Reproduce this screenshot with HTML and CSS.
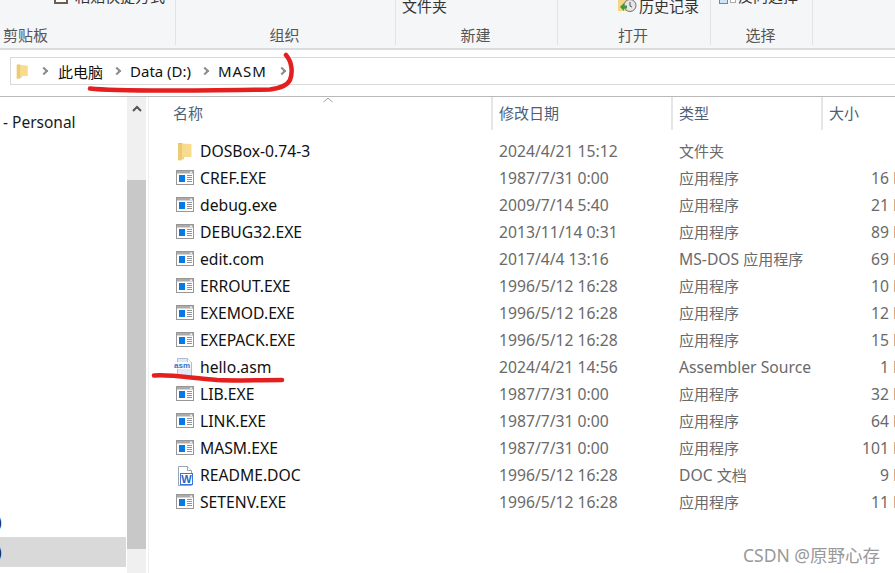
FILE: index.html
```html
<!DOCTYPE html>
<html lang="zh">
<head>
<meta charset="utf-8">
<title>MASM</title>
<link rel="stylesheet" href="styles.css">
</head>
<body>
<svg class="defs" width="0" height="0" aria-hidden="true">
  <symbol id="exe" viewBox="0 0 18 15">
    <rect x="0.500" y="0.500" width="17" height="14" fill="#fff" stroke="#979797"/>
    <rect x="1" y="1" width="16" height="2.500" fill="#ababab"/>
    <rect x="14" y="1.500" width="2" height="1.500" fill="#ececec"/>
    <rect x="3" y="5" width="6" height="7" fill="#0878e4"/>
    <path d="M11 5.500h5M11 7.500h5M11 9.500h5M11 11.500h5" stroke="#939393" stroke-width="1"/>
  </symbol>
  <symbol id="folder" viewBox="0 0 16 19">
    <path d="M1 1h4l2 2v14l-6 1.500z" fill="#e5c466"/>
    <path d="M5 1.500l8.500 0.500q1 0 1 1v11q0 1-1 1H7l-2 3.500q-1 0.500-2 0l2-3.500z" fill="#f7dc8e"/>
    <path d="M1 2.500h3.500v15L1 18z" fill="#eccd76"/>
  </symbol>
</svg>

<div class="ribbon">
  <div class="ribbon-group g-clip">
    <div class="ribbon-top"><span class="paste-box"></span><span class="cut">粘贴快捷方式</span></div>
    <div class="ribbon-label left">剪贴板</div>
  </div>
  <div class="ribbon-group g-org">
    <div class="ribbon-top"></div>
    <div class="ribbon-label">组织</div>
  </div>
  <div class="ribbon-group g-new">
    <div class="ribbon-top"><span class="top-text new-folder">文件夹</span></div>
    <div class="ribbon-label">新建</div>
  </div>
  <div class="ribbon-group g-open">
    <div class="ribbon-top history">
      <svg class="history-icon" width="20" height="15" viewBox="0 0 20 15">
        <rect x="0" y="0" width="12" height="13" fill="#f3d582"/>
        <circle cx="12" cy="7.500" r="6" fill="#e6e6e6" stroke="#6d6d6d"/>
        <path d="M12 4v4l2 1" stroke="#555" fill="none"/>
        <path d="M2 9l4-4v2.500h3v3H6V13z" fill="#3d9a3a"/>
      </svg>
      <span class="top-text">历史记录</span>
    </div>
    <div class="ribbon-label">打开</div>
  </div>
  <div class="ribbon-group g-select">
    <div class="ribbon-top select-top">
      <span class="check-a"></span><span class="check-b"></span><span class="cut">反向选择</span>
    </div>
    <div class="ribbon-label">选择</div>
  </div>
</div>

<div class="address-wrap">
  <div class="address">
    <svg class="crumb-folder" width="13" height="17"><use href="#folder"/></svg>
    <span class="chev first"></span>
    <span class="crumb">此电脑</span>
    <span class="chev"></span>
    <span class="crumb c-data">Data (D:)</span>
    <span class="chev"></span>
    <span class="crumb c-masm">MASM</span>
    <span class="chev"></span>
  </div>
</div>

<div class="main">
  <nav class="sidebar">
    <div class="nav-item personal">- Personal</div>
    <div class="nav-spacer"></div>
    <div class="nav-item drive"><span>)</span></div>
    <div class="nav-item drive selected"><span>)</span></div>
  </nav>
  <div class="scrollbar">
    <svg class="scroll-up" width="10" height="7" viewBox="0 0 10 7"><path d="M1 6l4-4 4 4" fill="none" stroke="#555" stroke-width="2"/></svg>
    <div class="thumb"></div>
  </div>
  <div class="content">
    <div class="row header">
      <div class="h-name">名称<svg class="sort" width="10" height="6" viewBox="0 0 10 6"><path d="M0.500 5l4.500-4 4.500 4" fill="none" stroke="#a0a0a0"/></svg></div>
      <div class="h-cell">修改日期</div>
      <div class="h-cell">类型</div>
      <div class="h-cell">大小</div>
    </div>
    <div class="rows">
      <div class="row file"><div class="name"><svg class="ico ico-folder" width="16" height="19"><use href="#folder"/></svg>DOSBox-0.74-3</div><div class="cell">2024/4/21 15:12</div><div class="cell cjk">文件夹</div><div class="size"></div></div>
      <div class="row file"><div class="name"><svg class="ico ico-exe" width="18" height="15"><use href="#exe"/></svg>CREF.EXE</div><div class="cell">1987/7/31 0:00</div><div class="cell cjk">应用程序</div><div class="size">16 KB</div></div>
      <div class="row file"><div class="name"><svg class="ico ico-exe" width="18" height="15"><use href="#exe"/></svg>debug.exe</div><div class="cell">2009/7/14 5:40</div><div class="cell cjk">应用程序</div><div class="size">21 KB</div></div>
      <div class="row file"><div class="name"><svg class="ico ico-exe" width="18" height="15"><use href="#exe"/></svg>DEBUG32.EXE</div><div class="cell">2013/11/14 0:31</div><div class="cell cjk">应用程序</div><div class="size">89 KB</div></div>
      <div class="row file"><div class="name"><svg class="ico ico-exe" width="18" height="15"><use href="#exe"/></svg>edit.com</div><div class="cell">2017/4/4 13:16</div><div class="cell">MS-DOS <span class="cjk">应用程序</span></div><div class="size">69 KB</div></div>
      <div class="row file"><div class="name"><svg class="ico ico-exe" width="18" height="15"><use href="#exe"/></svg>ERROUT.EXE</div><div class="cell">1996/5/12 16:28</div><div class="cell cjk">应用程序</div><div class="size">10 KB</div></div>
      <div class="row file"><div class="name"><svg class="ico ico-exe" width="18" height="15"><use href="#exe"/></svg>EXEMOD.EXE</div><div class="cell">1996/5/12 16:28</div><div class="cell cjk">应用程序</div><div class="size">12 KB</div></div>
      <div class="row file"><div class="name"><svg class="ico ico-exe" width="18" height="15"><use href="#exe"/></svg>EXEPACK.EXE</div><div class="cell">1996/5/12 16:28</div><div class="cell cjk">应用程序</div><div class="size">15 KB</div></div>
      <div class="row file"><div class="name"><svg class="ico ico-asm" width="19" height="19" viewBox="0 0 19 19"><path d="M3.500 0.500h10l4 4v14h-14z" fill="#dfe9f7" stroke="#b0bccb"/><path d="M13.500 0.500v4h4" fill="#fff" stroke="#b0bccb"/><rect x="0" y="4" width="17" height="7" fill="#fff" opacity="0.800"/><text class="asm-label" x="0" y="10">asm</text></svg>hello.asm</div><div class="cell">2024/4/21 14:56</div><div class="cell">Assembler Source</div><div class="size">1 KB</div></div>
      <div class="row file"><div class="name"><svg class="ico ico-exe" width="18" height="15"><use href="#exe"/></svg>LIB.EXE</div><div class="cell">1987/7/31 0:00</div><div class="cell cjk">应用程序</div><div class="size">32 KB</div></div>
      <div class="row file"><div class="name"><svg class="ico ico-exe" width="18" height="15"><use href="#exe"/></svg>LINK.EXE</div><div class="cell">1987/7/31 0:00</div><div class="cell cjk">应用程序</div><div class="size">64 KB</div></div>
      <div class="row file"><div class="name"><svg class="ico ico-exe" width="18" height="15"><use href="#exe"/></svg>MASM.EXE</div><div class="cell">1987/7/31 0:00</div><div class="cell cjk">应用程序</div><div class="size">101 KB</div></div>
      <div class="row file"><div class="name"><svg class="ico" width="18" height="20" viewBox="0 0 18 20"><path d="M2.500 0.500h9l4 4v15h-13z" fill="#fff" stroke="#9aa4b3"/><path d="M11.500 0.500v4h4" fill="#fff" stroke="#9aa4b3"/><rect x="4.500" y="7.500" width="12" height="11" fill="#fff" stroke="#3f74d8"/><text class="doc-label" x="10.500" y="17">W</text></svg>README.DOC</div><div class="cell">1996/5/12 16:28</div><div class="cell">DOC <span class="cjk">文档</span></div><div class="size">9 KB</div></div>
      <div class="row file"><div class="name"><svg class="ico ico-exe" width="18" height="15"><use href="#exe"/></svg>SETENV.EXE</div><div class="cell">1996/5/12 16:28</div><div class="cell cjk">应用程序</div><div class="size">11 KB</div></div>
    </div>
  </div>
</div>

<svg class="ink" width="895" height="573" viewBox="0 0 895 573" aria-hidden="true">
  <path d="M90 88.500C120 92 200 90.500 270 89.500C280 88 287 86 290 80C293 72 292 62 286 55" />
  <path d="M154 375.500C170 374 190 378 217 380C240 381 262 380 282 380" />
</svg>
<div class="watermark">CSDN @原野心存</div>
</body>
</html>
```

FILE: styles.css
```css
* { box-sizing: border-box; }
html, body { margin: 0; padding: 0; height: 100%; }
body {
  position: relative;
  width: 895px;
  height: 573px;
  overflow: hidden;
  background: #fff;
  color: #1b1b1b;
  font-family: "Noto Sans", "Noto Sans CJK SC", sans-serif;
  font-size: 15px;
}
.defs { position: absolute; }

.ribbon {
  display: flex;
  height: 50px;
  background: #f5f6f7;
  border-bottom: 2px solid #dadbdc;
}
.ribbon-group {
  display: flex;
  flex-direction: column;
  flex: none;
  border-right: 1px solid #e2e3e4;
  margin-bottom: 3px;
}
.g-clip { width: 176px; }
.g-org { width: 220px; }
.g-new { width: 162px; }
.g-open { width: 153px; }
.g-select { width: 102px; }
.ribbon-top {
  position: relative;
  height: 26px;
  flex: none;
  display: flex;
  overflow: hidden;
  color: #333;
}
.ribbon-label {
  flex: 1;
  text-align: center;
  padding-right: 2px;
  line-height: 19px;
  color: #555;
}
.ribbon-label.left { text-align: left; padding: 0 0 0 3px; }
.top-text { line-height: 14px; margin-top: -1px; color: #333; }
.new-folder { margin-left: 6px; }
.cut { line-height: 14px; margin-top: -11px; color: #333; }
.paste-box { width: 14px; height: 6px; margin: -2px 7px 0 54px; border: 2px solid #6d5f52; background: #fff; }
.history { padding-left: 60px; }
.history-icon { margin: -2px 1px 0 0; flex: none; }
.select-top { padding-left: 8px; }
.check-a { width: 9px; height: 5px; margin-top: -1px; background: #cfe3f7; border: 1px solid #4a90d9; border-top: 0; }
.check-b { width: 6px; height: 4px; margin: -1px 2px 0 2px; background: #fff; border: 1px solid #aaa; border-top: 0; }

.address-wrap {
  height: 47px;
  padding: 7px 0 12px 10px;
  border-bottom: 1px solid #b9b9b9;
}
.address {
  display: flex;
  align-items: center;
  height: 28px;
  padding-left: 5px;
  border: 1px solid #d9d9d9;
  border-right: 0;
  color: #111;
}
.crumb-folder { flex: none; }
.crumb { flex: none; white-space: nowrap; }
.c-data { width: 61px; }
.c-masm { width: 50px; letter-spacing: 0.900px; }
.chev {
  flex: none;
  width: 6px;
  height: 6px;
  margin: 0 10px 0 11px;
  border-top: 2px solid #8c8c8c;
  border-right: 2px solid #8c8c8c;
  transform: rotate(45deg);
}
.chev.first { margin-left: 12px; margin-right: 11px; }

.main {
  display: flex;
  height: 476px;
}
.sidebar {
  flex: none;
  width: 127px;
  display: flex;
  flex-direction: column;
  padding-top: 12px;
  overflow: hidden;
}
.nav-item { height: 30px; line-height: 27px; padding-left: 3px; font-size: 15.500px; flex: none; }
.nav-spacer { flex: 1; }
.drive { padding-left: 0; line-height: 30px; }
.drive span { margin-left: -3px; color: #123; }
.selected { background: #d9d9d9; width: 126px; margin-bottom: 6px; }
.scrollbar {
  position: relative;
  flex: none;
  width: 19px;
  background: #f0f0f0;
  display: flex;
  flex-direction: column;
  align-items: center;
  padding-top: 8px;
}
.thumb {
  width: 100%;
  height: 369px;
  margin-top: 68px;
  background: #c8c8c8;
}
.content {
  flex: none;
  width: 765px;
  margin-left: 2px;
  border-left: 1px solid #f0f0f0;
}
.row {
  display: grid;
  grid-template-columns: 344px 180px 150px 90px;
}
.header { height: 32px; color: #4c607a; }
.h-name { position: relative; padding-left: 24px; line-height: 33px; border-right: 2px solid #e5e5e5; }
.h-cell { padding-left: 6px; line-height: 33px; border-right: 2px solid #e5e5e5; }
.h-cell:first-of-type { padding-left: 7px; }
.h-cell:last-child { border-right: 0; }
.sort { position: absolute; left: 174px; top: 0; }
.rows { padding-top: 9px; }
.file { height: 27px; line-height: 27px; color: #6a6a6a; font-size: 15.700px; }
.cell { padding-left: 6px; white-space: nowrap; }
.cjk { font-size: 15px; }
.name { display: flex; align-items: center; padding-left: 27px; color: #111; position: relative; }
.ico { flex: none; margin-right: 6px; }
.ico-exe { margin-top: -2px; }
.ico-folder { margin-left: 1px; margin-right: 7px; }
.ico-asm { margin-left: -2px; margin-right: 7px; }
.size { text-align: right; white-space: nowrap; }
.asm-label { font-family: "Liberation Sans", sans-serif; font-size: 8px; font-weight: 700; fill: #3a6fc4; }
.doc-label { font-family: "Liberation Sans", sans-serif; font-size: 11px; font-weight: 700; fill: #2f62c8; text-anchor: middle; }

.ink { position: absolute; left: 0; top: 0; pointer-events: none; }
.ink path { fill: none; stroke: #e3201f; stroke-width: 4.500; stroke-linecap: round; stroke-linejoin: round; }
.watermark {
  position: absolute;
  right: 15px;
  bottom: 7px;
  font-size: 17.500px;
  line-height: 22px;
  color: #999;
}
```
